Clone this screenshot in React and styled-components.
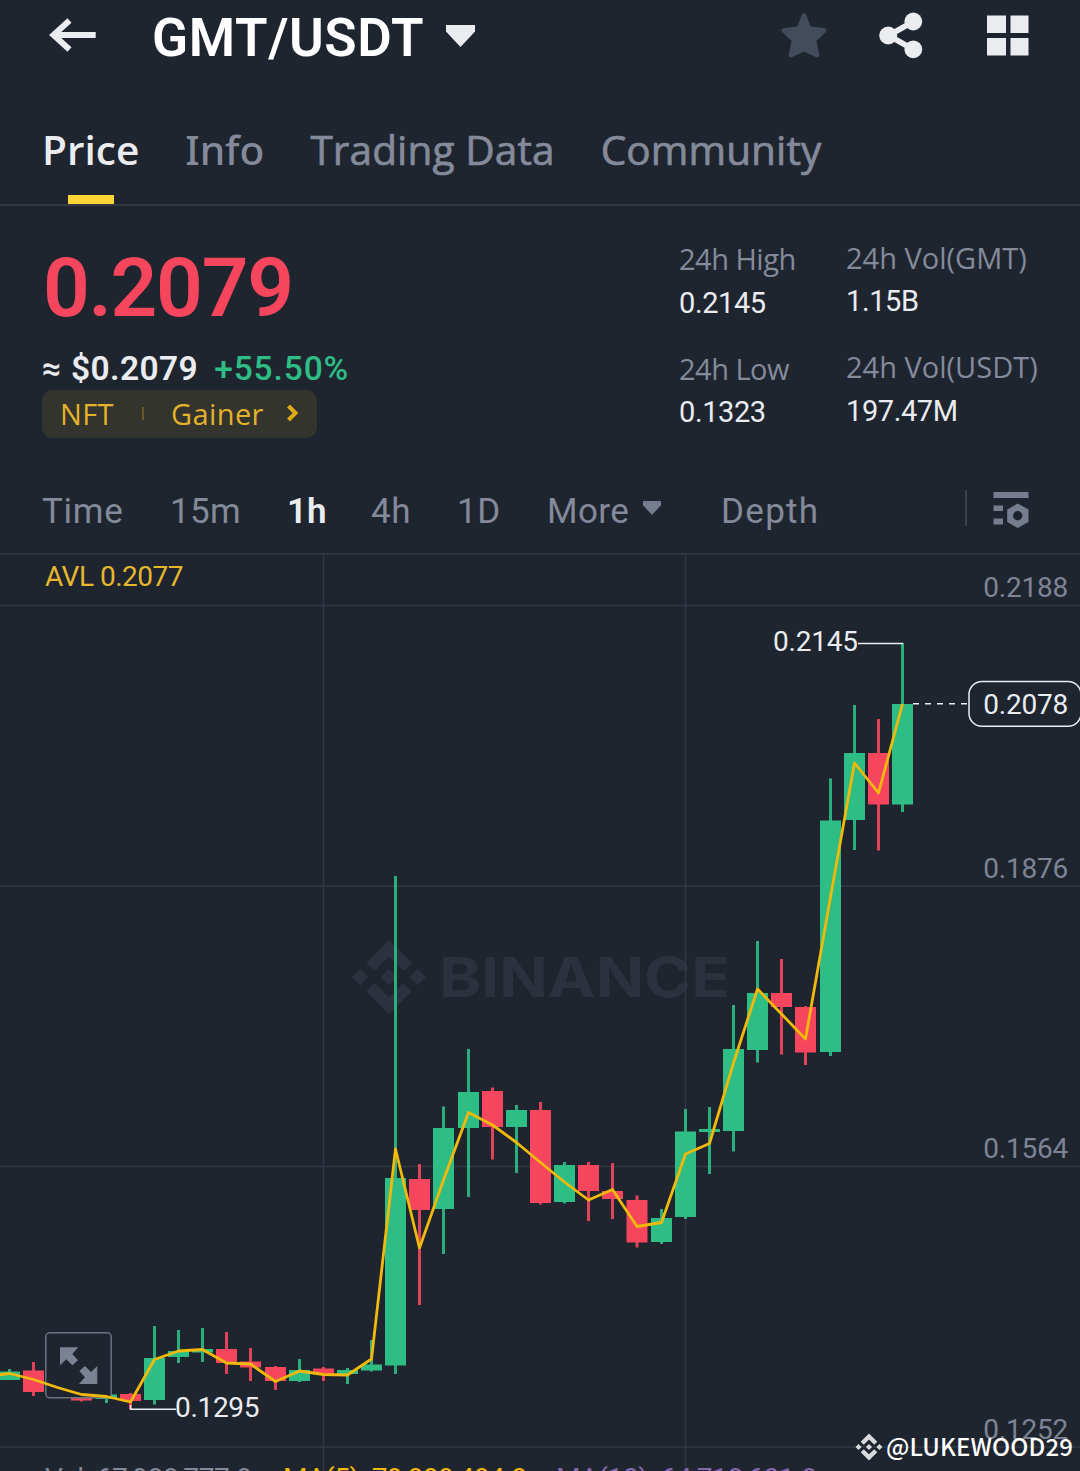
import React from 'react';
import styled, { createGlobalStyle } from 'styled-components';

const colors = {
    bg: '#1f252f',
    line: '#323944',
    text: '#eaecef',
    grey: '#848a9a',
    green: '#2ebd85',
    red: '#f6465d',
    yellow: '#f0b90b',
    purple: '#8566b0'
}

const GlobalStyle = createGlobalStyle`
body {
margin: 0;
background: ${colors.bg};
font-family: Roboto, "Liberation Sans", sans-serif;
}

* {
box-sizing: border-box;
}
`

const Screen = styled.div`
width: 1080px;
height: 1471px;
overflow: hidden;
display: flex;
flex-direction: column;
color: ${colors.text};
background: ${colors.bg};
`

const Header = styled.header`
height: 70px;
padding: 0 51px 0 48px;
display: flex;
align-items: center;
`

const Title = styled.h1`
margin: 6px 22px 0 54px;
font-size: 53px;
line-height: 64px;
font-weight: 600;
letter-spacing: 0.6px;
color: #fff;
`

const TitleCaret = styled.div`
display: flex;
margin-top: 2px;
`

const HeaderIcons = styled.div`
margin-left: auto;
display: grid;
grid-template-columns: 98px 108px 42px;
align-items: center;
`

const Tabs = styled.nav`
height: 136px;
padding: 50px 0 0 42px;
display: flex;
gap: 46px;
border-bottom: 2px solid ${colors.line};
`

const Tab = styled.div`
display: flex;
flex-direction: column;
align-items: center;
justify-content: space-between;
font-family: ${props => props.$family || '"Open Sans"'}, sans-serif;
font-size: 40.6px;
line-height: 60px;
font-weight: ${props => props.$active ? 600 : 500};
letter-spacing: ${props => props.$spacing || 0}px;
-webkit-text-stroke: ${props => props.$stroke || 0}px;
color: ${props => props.$active ? colors.text : colors.grey};
white-space: nowrap;
`

const Underline = styled.div`
width: 46px;
height: 9px;
background: #fcd535;
`

const Summary = styled.section`
height: 262px;
padding-left: 42px;
display: flex;
`

const PriceColumn = styled.div`
width: 637px;
padding-top: 37px;
display: flex;
flex-direction: column;
align-items: flex-start;
`

const BigPrice = styled.div`
height: 90px;
margin: 0 0 15px 1px;
font-size: 82px;
line-height: 90px;
font-weight: 600;
letter-spacing: -1.3px;
color: ${colors.red};
`

const PriceRow = styled.div`
height: 40px;
margin-bottom: 2px;
display: flex;
font-size: 33.5px;
line-height: 41px;
font-weight: 600;
letter-spacing: 0.4px;
white-space: nowrap;
`

const Approx = styled.span`
width: 29px;
`

const Change = styled.span`
margin-left: 16px;
font-weight: 500;
letter-spacing: 0.9px;
color: ${colors.green};
`

const Chip = styled.div`
width: 275px;
height: 48px;
padding: 0 18px 2px 18px;
display: flex;
align-items: center;
border-radius: 11px;
background: #34342e;
font-family: "Open Sans", sans-serif;
font-size: 29px;
letter-spacing: 0.4px;
color: #e3b22a;
`

const ChipDivider = styled.span`
width: 2px;
height: 13px;
margin: 0 27px 0 28px;
background: #6a5820;
`

const StatColumn = styled.div`
width: ${props => props.$width}px;
padding-top: ${props => props.$top}px;
display: flex;
flex-direction: column;
gap: 26px;
`

const Stat = styled.div`
display: flex;
flex-direction: column;
gap: 3.5px;
line-height: 40px;
font-size: 29px;
white-space: nowrap;
`

const StatLabel = styled.span`
font-family: "Open Sans", sans-serif;
letter-spacing: ${props => props.$spacing || 0}px;
color: ${colors.grey};
`

const StatValue = styled.span`
letter-spacing: -0.4px;
`

const Intervals = styled.div`
height: 85px;
padding: 0 51px 0 42px;
display: flex;
align-items: center;
font-size: 35px;
line-height: 44px;
letter-spacing: 0.7px;
color: ${colors.grey};
`

const Interval = styled.span`
width: ${props => props.$width}px;
padding-top: 2px;
display: flex;
align-items: center;
gap: 14px;
font-weight: ${props => props.$active ? 600 : 400};
letter-spacing: ${props => props.$spacing || 0.7}px;
color: ${props => props.$active ? colors.text : 'inherit'};
`

const MoreCaret = styled.span`
display: flex;
margin-bottom: 7px;
`

const Separator = styled.span`
width: 2px;
height: 36px;
margin: 0 26px 5px auto;
background: #3a414d;
`

const SettingsButton = styled.span`
display: flex;
margin-bottom: 3px;
`

const ChartSvg = styled.svg`
display: block;
flex: none;
font-family: Roboto, sans-serif;
font-size: 28px;
`

// x, open/close top, open/close bottom, high, low, up
const candles = [
    [9.5, 1371.5, 1380, 1369, 1380, 1],
    [33.5, 1370.5, 1392, 1362, 1396, 0],
    [81.5, 1397, 1400.5, 1396, 1401.5, 0],
    [106.5, 1394.5, 1399, 1394, 1403, 1],
    [130.5, 1394, 1401, 1393, 1409, 0],
    [154.5, 1358, 1400, 1326, 1404.5, 1],
    [178.5, 1351, 1357, 1330, 1363, 1],
    [202.5, 1349, 1352.5, 1328, 1362, 1],
    [226.5, 1349, 1363, 1332, 1374, 0],
    [250.5, 1361.5, 1367.5, 1348, 1381, 0],
    [275.5, 1367, 1381, 1366, 1390, 0],
    [299.5, 1370, 1381, 1359, 1382, 1],
    [323.5, 1368.5, 1374, 1367, 1381, 0],
    [347.5, 1370, 1374, 1368, 1384, 1],
    [371.5, 1364.5, 1370.5, 1340, 1371.5, 1],
    [395.5, 1178, 1365.5, 876, 1374, 1],
    [419.5, 1179, 1210, 1164, 1305, 0],
    [443.5, 1128, 1209, 1106.5, 1254, 1],
    [468.5, 1092, 1128, 1049, 1197, 1],
    [492.5, 1091, 1127, 1087.5, 1159.5, 0],
    [516.5, 1110, 1127, 1105, 1173, 1],
    [540.5, 1110, 1203, 1102, 1204.5, 0],
    [564.5, 1165, 1202, 1162, 1203.5, 1],
    [588.5, 1165, 1191, 1162, 1221, 0],
    [612.5, 1191, 1199, 1163, 1219, 0],
    [637, 1200, 1242.5, 1195.5, 1247.5, 0],
    [661.5, 1218, 1242, 1209, 1244, 1],
    [685.5, 1131.5, 1217, 1109, 1219, 1],
    [709.5, 1129, 1132, 1107, 1174, 1],
    [733.5, 1049, 1131, 1005, 1151.5, 1],
    [757.5, 993, 1050, 941, 1062.5, 1],
    [781.5, 993, 1007, 959, 1054.5, 0],
    [805.5, 1007, 1052.5, 1006, 1065, 0],
    [830.5, 820.5, 1052, 778.5, 1056, 1],
    [854.5, 753, 820, 705, 850, 1],
    [878.5, 753, 804.5, 719, 850.5, 0],
    [902.5, 704, 804.5, 643, 812, 1]
]

const avlLine = [
    [-2, 1375], [9.5, 1373.5], [33.5, 1379.5], [57.5, 1387.5], [81.5, 1394.5], [106.5, 1396.5],
    [130.5, 1402], [154.5, 1359.5], [178.5, 1351], [202.5, 1349.5], [226.5, 1363], [250.5, 1364],
    [275.5, 1381.5], [299.5, 1371], [323.5, 1374.5], [347.5, 1375], [371.5, 1359], [395.5, 1149],
    [419.5, 1248], [443.5, 1180], [468.5, 1112.5], [492.5, 1125], [516.5, 1142.5], [540.5, 1162.5],
    [564.5, 1182], [588.5, 1200], [612.5, 1189.5], [637, 1226.5], [661.5, 1222.5], [685.5, 1154],
    [709.5, 1143.5], [733.5, 1063], [757.5, 989], [781.5, 1014], [805.5, 1039], [830.5, 897],
    [854.5, 763], [878.5, 793], [902.5, 704]
]

const priceLevels = [
    { y: 605.5, price: '0.2188' },
    { y: 886, price: '0.1876' },
    { y: 1166.5, price: '0.1564' },
    { y: 1447, price: '0.1252' }
]

const logoPath = 'M38.73 53.2l24.59-24.58 24.6 24.6 14.3-14.31L63.32 0 24.43 38.9ZM0 63.31 14.3 49l14.31 14.31L14.3 77.61ZM38.73 73.41 63.32 98l24.6-24.61 14.31 14.29L63.32 126.61 24.42 87.71ZM98 63.31l14.3-14.31 14.31 14.3L112.31 77.61ZM77.83 63.3 63.32 48.78 48.81 63.29 63.32 77.8Z'

const BackIcon = () => (
    <svg width="50" height="36" viewBox="0 0 50 36" fill="none" stroke={colors.text} strokeWidth="6">
        <path d="M21.5 3.5 5.5 18l16 14.5M5 18h42.7" />
    </svg>
)

const Caret = ({ width, height, color }) => (
    <svg width={width} height={height} viewBox="0 0 29 22" preserveAspectRatio="none" fill={color}>
        <path d="M0 0H29V6.5L14.5 22 0 6.5Z" />
    </svg>
)

const StarIcon = () => (
    <svg width="46" height="46" viewBox="0 0 46 46" fill="#434c5b" stroke="#434c5b" strokeWidth="4" strokeLinejoin="round">
        <path d="M23 3 28.3 16.3 43.5 18.3 33.3 28.3 36.3 43.3 23 37.5 9.7 43.3 12.7 28.3 2.5 18.3 17.7 16.3Z" />
    </svg>
)

const ShareIcon = () => (
    <svg width="44" height="47" viewBox="0 0 44 47" fill={colors.text}>
        <path d="M34.5 9.5 9.5 23.5 34.5 37.5" fill="none" stroke={colors.text} strokeWidth="5.6" />
        <circle cx="9.2" cy="23.5" r="9" />
        <circle cx="34.3" cy="9.5" r="8.9" />
        <circle cx="34.3" cy="37.3" r="8.9" />
    </svg>
)

const GridIcon = () => (
    <svg width="42" height="41" viewBox="0 0 42 41" fill={colors.text}>
        <path d="M0 .5H19V18H0ZM23.5 .5H41.5V18H23.5ZM0 23H19V40.5H0ZM23.5 23H41.5V40.5H23.5Z" />
    </svg>
)

const SettingsIcon = () => (
    <svg width="36" height="37" viewBox="0 0 36 37" fill="#767d8e">
        <path d="M.5 1H35.5V7H.5ZM.5 14.5H10V20H.5ZM.5 27.5H10V33.5H.5Z" />
        <path fillRule="evenodd" d="M24.7 12.5 35.5 18.5V31L24.7 37 14.2 31V18.5ZM24.7 20A4.7 4.7 0 1 0 24.7 29.4 4.7 4.7 0 1 0 24.7 20Z" />
    </svg>
)

const ChipArrow = styled(({ className }) => (
    <svg className={className} width="13" height="18" viewBox="0 0 13 18" fill="none" stroke="#e0aa16" strokeWidth="4">
        <path d="M2.5 2 9.5 9 2.5 16" />
    </svg>
))`
margin-left: auto;
`

const Candle = ({ data }) => {
    const [x, top, bottom, high, low, up] = data
    const color = up ? colors.green : colors.red
    return (
        <g fill={color}>
            <rect x={x - 1.5} y={high} width="3" height={low - high} opacity="0.9" />
            <rect x={x - 10.5} y={top} width="21" height={bottom - top} />
        </g>
    )
}

const Chart = () => (
    <ChartSvg width="1080" height="918" viewBox="0 553 1080 918">
        <path d="M0 554H1080" stroke="#2d343f" strokeWidth="2" />
        <g fill="#2c323d">
            <path d={logoPath} transform="translate(352 940) scale(0.5845)" />
            <text x="439" y="997" textLength="291" lengthAdjust="spacingAndGlyphs" fontFamily="Inter, sans-serif" fontSize="55.5" fontWeight="700">BINANCE</text>
        </g>
        <path d="M323.5 555V1471M685.5 555V1471" stroke={colors.line} strokeWidth="1.5" />
        {priceLevels.map(level => (
            <g key={level.price}>
                <path d={`M0 ${level.y}H1080`} stroke={colors.line} strokeWidth="1.5" />
                <text x="983.3" y={level.y - 8.5} textLength="85" fill="#7e8493">{level.price}</text>
            </g>
        ))}
        <text x="45" y="586" fill="#e6b62c" textLength="138.5">AVL 0.2077</text>

        {candles.map(candle => <Candle key={candle[0]} data={candle} />)}

        <rect x="45.8" y="1332.8" width="65.4" height="65" rx="4" fill={colors.bg} stroke="#6b7282" strokeWidth="1.5" />
        <path fill="#7b8294" d="M60 1347.3H78.3L72.3 1354 78 1360.3 72.3 1365.3 66.3 1359.2 60 1365.3ZM97.3 1384H79L85 1377.3 79.3 1371 85 1366 91 1372.1 97.3 1366Z" />

        <polyline points={avlLine.map(p => p.join(',')).join(' ')} fill="none" stroke={colors.yellow} strokeWidth="2.8" strokeLinejoin="round" />

        <g fill={colors.text}>
            <text x="773" y="651" textLength="85">0.2145</text>
            <text x="175" y="1416.8" textLength="84.5">0.1295</text>
        </g>
        <g fill="none" stroke={colors.text} strokeWidth="1.5">
            <path d="M858 643.5H903M130.5 1405V1409.3H176" />
            <path d="M913 703.7H968" strokeDasharray="6 6" />
            <rect x="969" y="681.5" width="112" height="44.8" rx="13" fill={colors.bg} />
        </g>
        <text x="983.3" y="713.8" textLength="85" fill={colors.text}>0.2078</text>

        <text x="45" y="1487.5" fill={colors.grey} textLength="207">Vol: 67,988,777.8</text>
        <text x="283" y="1487.5" fill={colors.yellow} textLength="244">MA(5): 79,888,484.8</text>
        <text x="556" y="1487.5" fill={colors.purple} textLength="261">MA(10): 64,718,601.8</text>

        <path d={logoPath} fill="#d8dadd" transform="translate(855.5 1433.5) scale(0.213)" />
        <text x="886" y="1456" fill="#fff" fontFamily='"Noto Sans CJK SC", sans-serif' fontSize="24" fontWeight="500" textLength="187">@LUKEWOOD29</text>
    </ChartSvg>
)

const App = () => {
    return (
        <Screen>
            <GlobalStyle />
            <Header>
                <BackIcon />
                <Title>GMT/USDT</Title>
                <TitleCaret><Caret width={29} height={22} color={colors.text} /></TitleCaret>
                <HeaderIcons>
                    <StarIcon />
                    <ShareIcon />
                    <GridIcon />
                </HeaderIcons>
            </Header>
            <Tabs>
                <Tab $active>Price<Underline /></Tab>
                <Tab $family='"Noto Sans"'>Info</Tab>
                <Tab $stroke={0.7} $spacing={0.1}>Trading Data</Tab>
                <Tab $stroke={0.7} $spacing={0.1}>Community</Tab>
            </Tabs>
            <Summary>
                <PriceColumn>
                    <BigPrice>0.2079</BigPrice>
                    <PriceRow>
                        <Approx>≈</Approx>
                        <span>$0.2079</span>
                        <Change>+55.50%</Change>
                    </PriceRow>
                    <Chip>
                        <span>NFT</span>
                        <ChipDivider />
                        <span>Gainer</span>
                        <ChipArrow />
                    </Chip>
                </PriceColumn>
                <StatColumn $width={167} $top={33}>
                    <Stat>
                        <StatLabel $spacing={-0.5}>24h High</StatLabel>
                        <StatValue>0.2145</StatValue>
                    </Stat>
                    <Stat>
                        <StatLabel $spacing={-0.5}>24h Low</StatLabel>
                        <StatValue>0.1323</StatValue>
                    </Stat>
                </StatColumn>
                <StatColumn $width={230} $top={31.5}>
                    <Stat>
                        <StatLabel>24h Vol(GMT)</StatLabel>
                        <StatValue>1.15B</StatValue>
                    </Stat>
                    <Stat>
                        <StatLabel>24h Vol(USDT)</StatLabel>
                        <StatValue>197.47M</StatValue>
                    </Stat>
                </StatColumn>
            </Summary>
            <Intervals>
                <Interval $width={128}>Time</Interval>
                <Interval $width={117} $spacing={0.3}>15m</Interval>
                <Interval $width={84} $active $spacing={0.1}>1h</Interval>
                <Interval $width={86}>4h</Interval>
                <Interval $width={90}>1D</Interval>
                <Interval $width={174} $spacing={0.4}>More<MoreCaret><Caret width={18} height={14} color="#767d8e" /></MoreCaret></Interval>
                <Interval $width={110} $spacing={1.3}>Depth</Interval>
                <Separator />
                <SettingsButton><SettingsIcon /></SettingsButton>
            </Intervals>
            <Chart />
        </Screen>
    )
}

export default App
